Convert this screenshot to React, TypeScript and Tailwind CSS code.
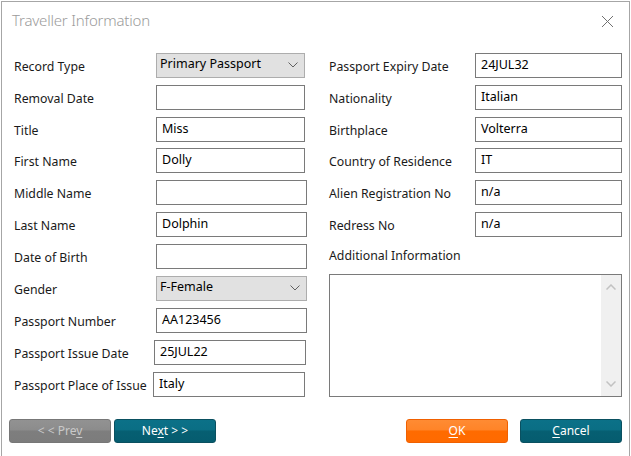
import React from 'react';

const font = { fontFamily: '"Noto Sans", "Open Sans", Arial, sans-serif' };

function Field({ value, className }: { value?: string; className: string }) {
  return (
    <div className={`h-[25px] border border-[#7a7a7a] bg-white pl-[5px] text-[12.5px] leading-[21px] text-black ${className}`}>
      {value}
    </div>
  );
}

function Select({ value, className }: { value: string; className: string }) {
  return (
    <div className={`flex h-[25px] items-center justify-between border border-[#adadad] bg-[#e1e1e1] pl-[3px] pr-[6px] text-[12.5px] text-black ${className}`}>
      <span className="-mt-[2px]">{value}</span>
      <svg width="10" height="6" viewBox="0 0 10 6" className="mb-[2px]">
        <path d="M0.5 0.5 L5 5 L9.5 0.5" fill="none" stroke="#606060" strokeWidth="1" />
      </svg>
    </div>
  );
}

function Row({ label, children, top }: { label: string; children: React.ReactNode; top: string }) {
  return (
    <div className={`flex items-start ${top}`}>
      <div className="w-[142px] shrink-0 whitespace-nowrap pt-[5px] text-[12.3px] leading-[18px] text-[#1a1a1a]">{label}</div>
      {children}
    </div>
  );
}

function RRow({ label, value, top }: { label: string; value: string; top: string }) {
  return (
    <div className={`flex items-start ${top}`}>
      <div className="w-[146px] shrink-0 whitespace-nowrap pt-[5px] text-[12.3px] leading-[18px] text-[#1a1a1a]">{label}</div>
      <Field value={value} className="w-[147px]" />
    </div>
  );
}

function Btn({ label, u, tone, className }: { label: [string, string, string]; u?: boolean; tone: 'gray' | 'teal' | 'orange'; className: string }) {
  const bg =
    tone === 'gray'
      ? 'bg-[linear-gradient(#929292_0%,#8c8c8c_45%,#7e7e7e_50%,#7c7c7c_100%)] border-[#777] text-[#c9c9c9]'
      : tone === 'teal'
        ? 'bg-[linear-gradient(#0b7188_0%,#0a6e84_45%,#065f72_50%,#055c6f_100%)] border-[#0a5060] text-white'
        : 'bg-[linear-gradient(#ff8b33_0%,#ff8428_45%,#ff6b00_50%,#ff6a00_100%)] border-[#f06000] text-white';
  return (
    <div className={`flex h-[24px] w-[102px] items-center justify-center rounded-[3px] border text-[12px] ${bg} ${className}`}>
      <span className="-mt-[1px]">
        {label[0]}
        {u ? <span className="underline underline-offset-2">{label[1]}</span> : label[1]}
        {label[2]}
      </span>
    </div>
  );
}

export default function App() {
  return (
    <div className="h-[456px] w-[631px] overflow-hidden bg-white" style={font}>
      <div className="ml-px mt-px h-[470px] w-[629px] border border-[#a6a6a6] bg-white">
        <div className="flex h-[38px] items-center justify-between pl-[10px] pr-[15px]">
          <span className="-mt-[2px] text-[15px] font-light tracking-[-0.2px] text-[#9b9b9b]">Traveller Information</span>
          <svg width="13" height="13" viewBox="0 0 13 13">
            <path d="M1 1 L12 12 M12 1 L1 12" stroke="#707070" strokeWidth="1" />
          </svg>
        </div>
        <div className="flex pt-[13px]">
          <div className="w-[314px] pl-[12px]">
            <Row label="Record Type" top="">
              <Select value="Primary Passport" className="w-[149px]" />
            </Row>
            <Row label="Removal Date" top="mt-[7px]">
              <Field className="w-[149px]" />
            </Row>
            <Row label="Title" top="mt-[7px]">
              <Field value="Miss" className="w-[149px]" />
            </Row>
            <Row label="First Name" top="mt-[6px]">
              <Field value="Dolly" className="w-[149px]" />
            </Row>
            <Row label="Middle Name" top="mt-[7px]">
              <Field className="w-[151px]" />
            </Row>
            <Row label="Last Name" top="mt-[7px]">
              <Field value="Dolphin" className="w-[151px]" />
            </Row>
            <Row label="Date of Birth" top="mt-[7px]">
              <Field className="w-[151px]" />
            </Row>
            <Row label="Gender" top="mt-[7px]">
              <Select value="F-Female" className="w-[151px]" />
            </Row>
            <Row label="Passport Number" top="mt-[7px]">
              <Field value="AA123456" className="w-[151px]" />
            </Row>
            <Row label="Passport Issue Date" top="mt-[7px]">
              <Field value="25JUL22" className="-ml-[2px] w-[152px]" />
            </Row>
            <Row label="Passport Place of Issue" top="mt-[7px]">
              <Field value="Italy" className="-ml-[3px] w-[152px]" />
            </Row>
          </div>
          <div className="pl-[13px]">
            <RRow label="Passport Expiry Date" value="24JUL32" top="" />
            <RRow label="Nationality" value="Italian" top="mt-[7px]" />
            <RRow label="Birthplace" value="Volterra" top="mt-[7px]" />
            <RRow label="Country of Residence" value="IT" top="mt-[6px]" />
            <RRow label="Alien Registration No" value="n/a" top="mt-[7px]" />
            <RRow label="Redress No" value="n/a" top="mt-[7px]" />
            <div className="mt-[10px] text-[12.3px] leading-[18px] text-[#1a1a1a]">Additional Information</div>
            <div className="mt-[9px] flex h-[123px] w-[293px] border border-[#7a7a7a] bg-white">
              <div className="flex-1" />
              <div className="flex w-[20px] flex-col items-center justify-between bg-[#f0f0f0] py-[9px]">
                <svg width="10" height="6" viewBox="0 0 10 6">
                  <path d="M0.5 5.5 L5 1 L9.5 5.5" fill="none" stroke="#c2c2c2" strokeWidth="1.5" />
                </svg>
                <svg width="10" height="6" viewBox="0 0 10 6">
                  <path d="M0.5 0.5 L5 5 L9.5 0.5" fill="none" stroke="#c2c2c2" strokeWidth="1.5" />
                </svg>
              </div>
            </div>
          </div>
        </div>
        <div className="mt-[22px] flex pl-[7px]">
          <Btn label={['< < Pre', 'v', '']} u tone="gray" className="" />
          <Btn label={['Ne', 'x', 't > >']} u tone="teal" className="ml-[3px]" />
          <Btn label={['', 'O', 'K']} u tone="orange" className="ml-[190px]" />
          <Btn label={['', 'C', 'ancel']} u tone="teal" className="ml-[12px]" />
        </div>
      </div>
    </div>
  );
}
